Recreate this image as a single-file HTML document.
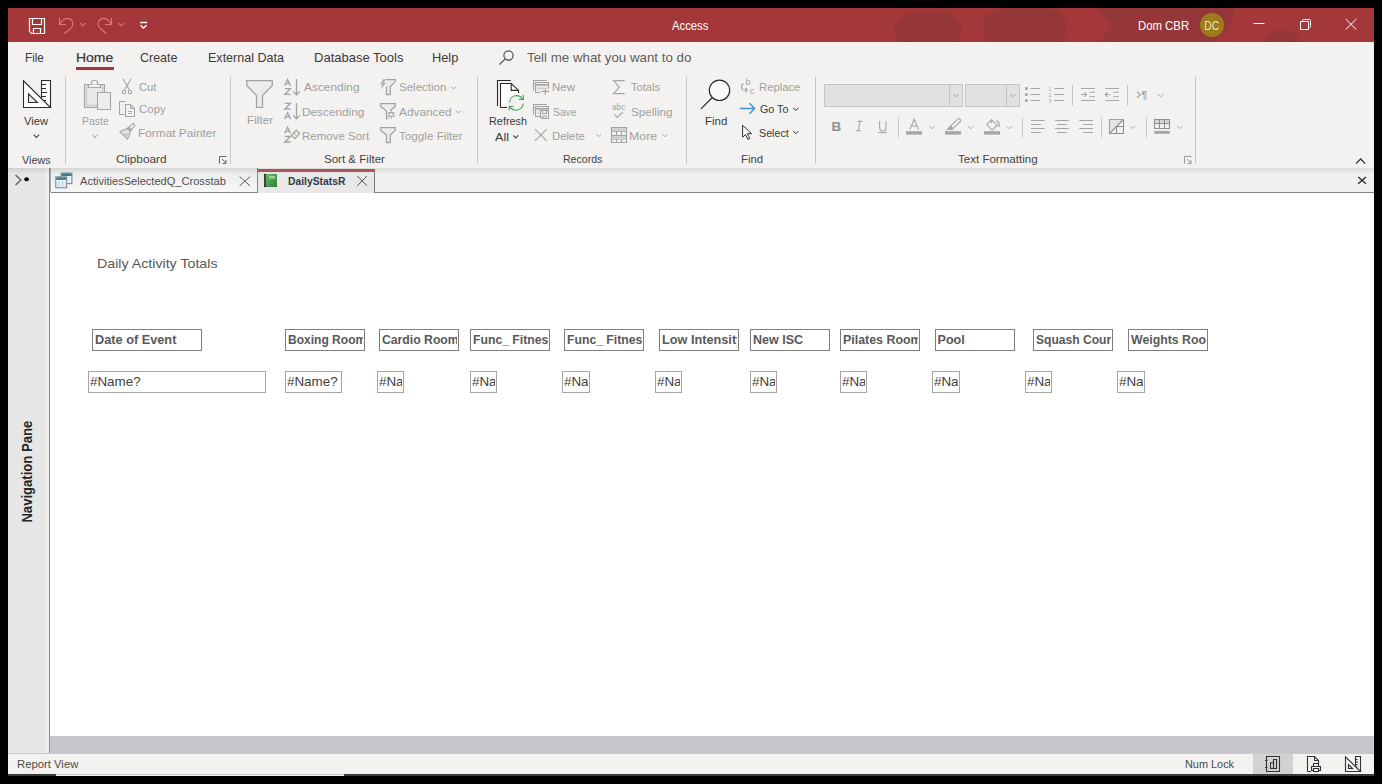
<!DOCTYPE html>
<html><head><meta charset="utf-8"><title>Access</title>
<style>
*{margin:0;padding:0;box-sizing:border-box}
html,body{width:1382px;height:784px;overflow:hidden;background:#000;font-family:"Liberation Sans",sans-serif}
.a{position:absolute}
.tx{position:absolute;white-space:pre;transform-origin:0 0;font-family:"Liberation Sans",sans-serif}
svg{position:absolute;overflow:visible}
.sep{position:absolute;width:1px;background:#c8c6c4}
.lbl{position:absolute;border:1px solid #7f7f7f;overflow:hidden;background:#fff}
.fld{position:absolute;border:1px solid #a6a6a6;overflow:hidden;background:#fff}
.lbl span,.fld span{position:absolute;white-space:pre;transform-origin:0 0;font-family:"Liberation Sans",sans-serif}
.lbl span{font-weight:bold;color:#595959}
.fld span{color:#404040}
</style></head><body>
<!-- window -->
<div class="a" style="left:8px;top:8px;width:1366px;height:766px;background:#f3f2f1"></div>
<!-- title bar -->
<div class="a" style="left:8px;top:8px;width:1366px;height:34px;background:#a4373a"></div>
<!-- ribbon bottom shadow -->
<div class="a" style="left:8px;top:168px;width:1366px;height:1px;background:#e1dfdd"></div>
<!-- tab strip -->
<div class="a" style="left:8px;top:168px;width:1366px;height:24px;background:#f0f0f0"></div>
<!-- nav pane -->
<div class="a" style="left:8px;top:168px;width:41px;height:586px;background:#e6e6e6"></div>
<div class="a" style="left:45px;top:168px;width:4px;height:586px;background:#efefef"></div>
<div class="a" style="left:49px;top:168px;width:1px;height:586px;background:#8a8a8a"></div>
<div class="a" style="left:50px;top:168px;width:1px;height:24px;background:#a8a8a8"></div>
<!-- report area -->
<div class="a" style="left:50px;top:193px;width:1324px;height:543px;background:#ffffff"></div>
<!-- h scroll -->
<div class="a" style="left:50px;top:736px;width:1324px;height:17px;background:#c6c7ca"></div>
<!-- status bar -->
<div class="a" style="left:8px;top:753px;width:1366px;height:1px;background:#c9c9c9"></div>
<div class="a" style="left:8px;top:754px;width:1366px;height:20px;background:#f3f2f1"></div>
<div class="a" style="left:8px;top:774px;width:1366px;height:2px;background:#3a3a3a"></div>
<div class="a" style="left:56px;top:774px;width:288px;height:1px;background:#c4c4c4"></div><div class="a" style="left:56px;top:775px;width:288px;height:1px;background:#f4f4f4"></div>
<div class="a" style="left:1253px;top:754px;width:40px;height:20px;background:#d2d2d2"></div>
<!-- tab 1 -->
<div class="a" style="left:51px;top:168px;width:207px;height:25px;background:linear-gradient(#eaeaea,#f7f7f7);border-right:1px solid #858585;border-bottom:1px solid #858585"></div>
<!-- tab 2 -->
<div class="a" style="left:258px;top:169px;width:117px;height:24px;background:#e8e8e8;border-right:1px solid #7a7a7a"></div>
<div class="a" style="left:258px;top:169px;width:117px;height:3px;background:#b55a5d"></div>
<div class="a" style="left:375px;top:192px;width:999px;height:1px;background:#858585"></div>
<div class="a" style="left:8px;top:168px;width:1366px;height:6px;background:linear-gradient(rgba(0,0,0,0.09),rgba(0,0,0,0))"></div>
<!-- separators -->
<div class="sep" style="left:65px;top:77px;height:87px"></div>
<div class="sep" style="left:230px;top:77px;height:87px"></div>
<div class="sep" style="left:477px;top:77px;height:87px"></div>
<div class="sep" style="left:686px;top:77px;height:87px"></div>
<div class="sep" style="left:815px;top:77px;height:87px"></div>
<div class="sep" style="left:1195px;top:77px;height:87px"></div>
<!-- Home underline -->
<div class="a" style="left:76px;top:67px;width:38px;height:3px;background:#a4373a"></div>
<!-- DC avatar -->
<div class="a" style="left:1200px;top:13px;width:24px;height:24px;border-radius:50%;background:#a27a1e"></div>
<svg width="1382" height="784" viewBox="0 0 1382 784" style="left:0;top:0" fill="none">
<!-- ===== title bar pattern ===== -->
<defs><clipPath id="tb"><rect x="8" y="8" width="1366" height="34"/></clipPath></defs>
<g fill="#933739" opacity="0.85" clip-path="url(#tb)">
 <rect x="894" y="11" width="68" height="40" rx="26"/>
 <rect x="983" y="8" width="84" height="40" rx="22"/>
 <path d="M1096 8H1235C1232 20 1226 34 1216 42H1098L1112 26Z"/>
 <ellipse cx="1282" cy="40" rx="18" ry="10"/>
</g>
<!-- ===== title bar ===== -->
<g stroke="#fff" stroke-width="1.2">
 <path d="M29.5 18.5H44.5V33.5H31.5L29.5 31.5Z"/>
 <path d="M32.5 18.5V24.5H41.5V18.5"/>
 <path d="M33.5 33.5V28.5H40.5V33.5"/>
</g>
<g stroke="#e07676" stroke-width="1.1">
 <path d="M59.5 18V24.5H66"/>
 <path d="M59.8 24.2C62 19.5 66 17.8 69 18.6C72.5 19.6 73.8 23.5 72.3 26.5C70.5 29.5 67 31 64.5 33.8"/>
 <path d="M80.2 23.2L82.8 25.8L85.4 23.2"/>
 <path d="M111.5 18V24.5H105"/>
 <path d="M111.2 24.2C109 19.5 105 17.8 102 18.6C98.5 19.6 97.2 23.5 98.7 26.5C100.5 29.5 104 31 106.5 33.8"/>
 <path d="M118.4 23.2L121.2 25.8L124 23.2"/>
</g>
<g stroke="#fff" stroke-width="1.4">
 <path d="M140 22.5H147"/>
 <path d="M140.5 25.2L143.5 28L146.5 25.2"/>
</g>
<g stroke="#fff" stroke-width="1">
 <path d="M1253.5 23.5H1264.5"/>
 <path d="M1300.5 21.5H1308.5V29.5H1300.5Z"/>
 <path d="M1302.5 21.5V20.5C1302.5 19.8 1303 19.5 1303.5 19.5H1309C1310 19.5 1310.5 20 1310.5 21V26.5C1310.5 27 1310.2 27.5 1309.5 27.5H1308.5"/>
 <path d="M1345.7 19L1356.3 29.6M1356.3 19L1345.7 29.6"/>
</g>
<circle cx="1212" cy="25" r="12" fill="#9d7a1c"/>
<text x="1204.3" y="29.8" font-family="Liberation Sans" font-size="12" fill="#f4e7b8" textLength="14.8" lengthAdjust="spacingAndGlyphs">DC</text>
<!-- search -->
<g stroke="#444" stroke-width="1.1">
 <circle cx="508.5" cy="55.5" r="4.6"/>
 <path d="M505.2 58.8L499.3 64.7"/>
</g>
<!-- ===== Views ===== -->
<g stroke="#2b2b2b" stroke-width="1.1">
 <path d="M41.5 80.5H50.5V107.5H41.5Z" fill="#fff"/>
 <path d="M41.5 84.5H46M41.5 88.5H46M41.5 92.5H47M41.5 96.5H46M41.5 100.5H46"/>
 <path d="M23.5 80.8V107.5H50.5Z" fill="#fff"/>
 <path d="M28.5 93.8V102.5H37.5Z" fill="#f0f0f0"/>
 <path d="M33.6 134.6L36.4 137.4L39.2 134.6" stroke="#444"/>
</g>
<!-- ===== Clipboard ===== -->
<g stroke="#a6a6a6" stroke-width="1.1">
 <path d="M84.5 84.5H104.5V107.5H84.5Z" fill="#e9e9e9"/>
 <path d="M86.3 86.3H102.7V105.7H86.3Z" stroke="#cdcdcd" stroke-width="1.8"/>
 <path d="M88.5 84.5H100.5V87.5H88.5Z" fill="#f3f3f3"/>
 <path d="M91.5 84.5V83C91.5 81 93 80.3 94.5 80.3C96 80.3 97.5 81 97.5 83V84.5" fill="#f3f3f3"/>
 <path d="M97.5 92.5H110.5V109.5H97.5Z" fill="#ededed"/>
 <path d="M92.2 134.8L94.8 137.4L97.4 134.8" stroke="#b0b0b0"/>
 <!-- cut -->
 <path d="M123 78.8L129.6 90.2M131 78.8L124.4 90.2"/>
 <circle cx="124" cy="92" r="1.7"/>
 <circle cx="130" cy="92" r="1.7"/>
 <!-- copy -->
 <path d="M125.5 101.5H119.5V114.5H124.5"/>
 <path d="M125.5 104.5H130.5L134.5 108.5V116.5H125.5Z" fill="#f3f3f3"/>
 <path d="M130.5 104.5V108.5H134.5"/>
 <path d="M128 111.5H132M128 113.5H132"/>
 <!-- painter -->
 <path d="M131 129.6L134.3 126.3C134.9 125.7 134.9 124.8 134.3 124.2C133.7 123.6 132.8 123.6 132.2 124.2L128.9 127.5Z" fill="#f3f3f3"/>
 <path d="M128.4 127.2L131.4 130.2L130.2 131.4L127.2 128.4Z" fill="#c4c4c4"/>
 <path d="M127.2 128.4C124.8 129.2 122 130.2 120 131.8L127.4 139.2C129 137.2 129.8 134.2 130.2 131.4Z" fill="#e4e4e4"/>
 <path d="M121.8 133.6C124.5 133.4 127 133.2 129.2 133.4L127.6 137.2Z" fill="#cdcdcd" stroke="none"/>
</g>
<!-- launchers -->
<g stroke="#666" stroke-width="1">
 <path d="M219.5 163.5V156.5H226.5"/>
 <path d="M222 159L226 163M226 160V163.5H222.5"/>
 <path d="M1184.5 163.5V156.5H1191.5" stroke="#999"/>
 <path d="M1187 159L1191 163M1191 160V163.5H1187.5" stroke="#999"/>
</g>
<!-- ===== Sort & Filter ===== -->
<g stroke="#a3a3a3" stroke-width="1.3">
 <path d="M246.7 80.7H272.3V85.5L262.5 95.5V107.3H256.5V95.5L246.7 85.5Z" fill="#ececec" stroke-linejoin="miter"/>
 <!-- ascending -->
 <path d="M284.6 85.8L287.6 79.6L290.6 85.8M285.6 83.7H289.6"/>
 <path d="M284.8 88.6H290.4L284.8 94.3H290.6"/>
 <path d="M296.5 79V94.8M293.3 91.4L296.5 94.8L299.8 91.4"/>
 <!-- descending -->
 <path d="M284.8 103.3H290.4L284.8 109H290.6"/>
 <path d="M284.6 119L287.6 112.8L290.6 119M285.6 116.9H289.6"/>
 <path d="M296.5 103V118.8M293.3 115.4L296.5 118.8L299.8 115.4"/>
 <!-- remove sort -->
 <path d="M284.6 133.5L287.6 127.3L290.6 133.5M285.6 131.4H289.6"/>
 <path d="M284.8 136.3H290.4L284.8 142H290.6"/>
 <path d="M291.5 135.5L296.3 130.3L299.6 133.6L294.8 138.6Z"/>
 <path d="M293.8 133.2L297 136.4" stroke-width="1"/>
 <!-- selection funnel -->
 <path d="M386 79.6H395.3V81.6L390.3 86.6V94.5H386.5V86.6" fill="#ececec"/>
 <path d="M383.2 79.6L380.6 84.4H382.9L381.2 88.6L385.6 83H383.4L385.2 79.6Z" fill="#b4b4b4" stroke="#a8a8a8" stroke-width="0.6"/>
 <!-- advanced -->
 <path d="M380.5 103.6H395.3V106.2L390.3 110.6M386.5 110.8V118.5H388.2M380.5 103.6V106.2L386.5 110.8" fill="#ececec"/>
 <circle cx="391.3" cy="114.6" r="2.2" stroke-width="1.1"/>
 <path d="M391.3 110.5V111.7M391.3 117.5V118.7M387.8 112.6L388.8 113.2M393.8 116L394.8 116.6M387.8 116.6L388.8 116M393.8 113.2L394.8 112.6" stroke-width="1.1"/>
 <!-- toggle -->
 <path d="M380.5 127.6H395.3V130.2L390.3 135V142.5H386.5V135L380.5 130.2Z" fill="#ececec"/>
 <path d="M451.2 86.6L453.6 89L456 86.6M456 110.6L458.4 113L460.8 110.6" stroke-width="1"/>
</g>
<!-- ===== Records ===== -->
<g stroke="#2b2b2b" stroke-width="1.1">
 <path d="M497.5 106V80.5H510.8"/>
 <path d="M500.5 107.5V83.5H511.2L518.5 90.4V93M507 107.5H500.5" fill="#fff"/>
 <path d="M511.2 83.6V90.4H518.6"/>
 <path d="M513.2 135.4L515.7 137.9L518.2 135.4" stroke="#444"/>
</g>
<g stroke="#45a05a" stroke-width="1.15" transform="translate(0 0.6)">
 <path d="M509.5 101.5C510 97.5 513 95 516.5 95C519.5 95 521.5 96.5 522.8 98.5"/>
 <path d="M523.3 94.5V98.8H519"/>
 <path d="M523.2 103C522.6 107 519.6 109.6 516.2 109.6C513.2 109.6 511.2 108 509.8 106"/>
 <path d="M509.3 110V105.7H513.6"/>
</g>
<g stroke="#a3a3a3" stroke-width="1.1">
 <!-- new -->
 <path d="M533.5 90.5V80.5H546.8"/>
 <path d="M540.5 92.5H535.5V82.5H548.5V89" fill="#ececec"/>
 <path d="M535.5 84.8H548.5" stroke-width="1.6"/>
 <path d="M538.2 88.3H540.2M541.5 88.3H543.5"/>
 <path d="M541.6 91.4H549M545.3 87.7V95"/>
 <!-- save -->
 <path d="M533.5 114.5V104.5H546.8"/>
 <path d="M540 116.5H535.5V106.5H548.5V109.5" fill="#ececec"/>
 <path d="M535.5 108.8H548.5" stroke-width="1.6"/>
 <circle cx="538.5" cy="113" r="0.6" fill="#a3a3a3" stroke="none"/>
 <path d="M540.5 110.5H548.5V118.5H541.8L540.5 117.2Z" fill="#f3f3f3"/>
 <path d="M542.5 110.5V113.5H546.5V110.5M543 118.5V116H546V118.5"/>
 <!-- delete -->
 <path d="M535 129.2L546.8 140.8M546.8 129.2L535 140.8"/>
 <path d="M596.2 134.3L598.6 136.7L601 134.3" stroke-width="1"/>
 <!-- totals -->
 <path d="M624.7 80.6H613.6L619.3 87.2L613.6 93.6H624.7"/>
 <!-- spelling check -->
 <path d="M614.3 114.4L617.2 117.4L622.8 112.2"/>
 <!-- more -->
 <path d="M611.5 127.5H626.5V142.5H611.5Z"/>
 <path d="M611.5 131.3H626.5M611.5 135.6H626.5M611.5 139H626.5M616.5 131.3V135.6M621.5 131.3V135.6M616.5 139V142.5M621.5 139V142.5"/>
 <rect x="612" y="128" width="14" height="3" fill="#d0d0d0" stroke="none"/>
 <rect x="612" y="136" width="14" height="3" fill="#d0d0d0" stroke="none"/>
 <path d="M662.6 134.3L665 136.7L667.4 134.3" stroke-width="1"/>
</g>
<text x="612" y="109.6" font-family="Liberation Sans" font-size="9.6" fill="#a3a3a3" textLength="13.4" lengthAdjust="spacingAndGlyphs">abc</text>
<!-- ===== Find ===== -->
<g stroke="#2b2b2b" stroke-width="1.2">
 <circle cx="719.5" cy="90.3" r="10.2" fill="#fafafa"/>
 <path d="M711.8 98L701 108.8"/>
 <path d="M742.6 125.3V137.2L745.4 134.6L747.9 139.4L749.8 138.5L747.4 133.7H751.6Z" fill="#fff" stroke-width="1"/>
 <path d="M793.2 107.9L795.8 110.5L798.4 107.9M793.2 131.1L795.8 133.7L798.4 131.1" stroke-width="1"/>
</g>
<g stroke="#3c8fd0" stroke-width="1.3">
 <path d="M740 108.5H755M749.4 103.2L754.7 108.5L749.4 113.8"/>
</g>
<g stroke="#a3a3a3" stroke-width="1.1">
 <path d="M743.5 83.5C741 85 740.8 88.5 743 89.8L747 90"/>
 <path d="M745.3 87.8L747.4 90L745.3 92"/>
</g>
<text x="745.6" y="85.4" font-family="Liberation Sans" font-size="9.2" fill="#a3a3a3">b</text>
<text x="749.8" y="93.9" font-family="Liberation Sans" font-size="9.2" fill="#a3a3a3">c</text>
<!-- ===== Text Formatting ===== -->
<g stroke="#c4c4c4" stroke-width="1">
 <path d="M824.5 84.5H962.5V106.5H824.5Z" fill="#e1e1e1"/>
 <path d="M949.5 85V106"/>
 <path d="M965.5 84.5H1019.5V106.5H965.5Z" fill="#e1e1e1"/>
 <path d="M1006.5 85V106"/>
</g>
<g stroke="#a6a6a6" stroke-width="1">
 <path d="M953.2 94.2L955.8 96.8L958.4 94.2M1010.2 94.2L1012.8 96.8L1015.4 94.2"/>
</g>
<g stroke="#a6a6a6" stroke-width="1.1">
 <!-- U -->
 <path d="M879.6 121.2V127.5C879.6 129.8 881 131 882.8 131C884.6 131 886 129.8 886 127.5V121.2"/>
 <path d="M878.2 132.6H887"/>
 <!-- I italic -->
 <path d="M857.5 121.4H862.5M855.8 130.8H860.8M860 121.4L858.3 130.8"/>
 <!-- A -->
 <path d="M909.8 129.6L914.2 119.2L918.6 129.6M911.3 126H917.1"/>
 <path d="M929.2 126.2L931.8 128.8L934.4 126.2M968 126.2L970.6 128.8L973.2 126.2M1006.8 126.2L1009.4 128.8L1012 126.2M1130.2 126.2L1132.6 128.6L1135 126.2M1177.2 126.2L1179.6 128.6L1182 126.2M1157.8 94.2L1160.6 96.8L1163.4 94.2" stroke-width="1"/>
 <!-- highlighter -->
 <path d="M950.5 126.2L957.8 119.1C958.6 118.4 959.6 118.4 960.2 119.1C960.9 119.8 960.9 120.8 960.2 121.5L953 128.6Z"/>
 <path d="M950.5 126.2L947.5 129.5H952L953 128.6Z" fill="#a6a6a6"/>
 <!-- fill bucket -->
 <path d="M986.8 124.8L991.5 119.5L997.2 125.2L992.2 130.2Z"/>
 <path d="M991.5 119.5V123" />
 <path d="M996 121.5C997.5 120.5 999 121.5 999 124V127" stroke-width="1.3"/>
 <!-- bullets -->
 <path d="M1030.3 88.5H1040.1M1030.3 94.5H1040.1M1030.3 100.5H1040.1"/>
 <path d="M1054.2 88.5H1064M1054.2 94.5H1064M1054.2 100.5H1064"/>
 <!-- indent -->
 <path d="M1081 88.5H1095M1089.5 92.3H1095M1089.5 96.7H1095M1081 100.5H1095M1081 94.5H1086.4M1084.2 92.2L1086.5 94.5L1084.2 96.8"/>
 <path d="M1105.2 88.5H1119M1113.1 92.3H1119M1113.1 96.7H1119M1105.2 100.5H1119M1105.2 94.5H1110.6M1107.5 92.2L1105.2 94.5L1107.5 96.8"/>
 <path d="M1137 91.8L1140.4 94.8L1137 97.7" stroke-width="1.2"/>
 <!-- align -->
 <path d="M1031 120.5H1044.7M1031 124.5H1040.8M1031 128.5H1044.7M1031 132.5H1040.8"/>
 <path d="M1055.2 120.5H1068.8M1057.1 124.5H1066.9M1055.2 128.5H1068.8M1057.1 132.5H1066.9"/>
 <path d="M1079.3 120.5H1092.9M1083.2 124.5H1092.9M1079.3 128.5H1092.9M1083.2 132.5H1092.9"/>
</g>
<g fill="#a6a6a6">
 <rect x="1025" y="87.2" width="2.7" height="2.7"/>
 <rect x="1025" y="93.2" width="2.7" height="2.7"/>
 <rect x="1025" y="99.2" width="2.7" height="2.7"/>
 <rect x="906" y="131.2" width="16" height="3.4"/>
 <rect x="945" y="131.2" width="16" height="3.4"/>
 <rect x="984" y="131.2" width="16" height="3.4"/>
 <rect x="1154.2" y="130.9" width="15.6" height="2.9"/>
</g>
<text x="1048.6" y="91" font-family="Liberation Sans" font-size="5" fill="#a6a6a6">1</text>
<text x="1048.6" y="97" font-family="Liberation Sans" font-size="5" fill="#a6a6a6">2</text>
<text x="1048.6" y="103" font-family="Liberation Sans" font-size="5" fill="#a6a6a6">3</text>
<text x="831.5" y="131" font-family="Liberation Sans" font-size="13.4" font-weight="bold" fill="#8f8f8f">B</text>
<text x="1141.4" y="98.9" font-family="Liberation Sans" font-size="10.4" font-weight="bold" fill="#a6a6a6">¶</text>
<g stroke="#8f8f8f" stroke-width="1.1">
 <path d="M1109.5 119.5H1123.5V133.5H1109.5Z"/>
 <path d="M1109.8 119.8V133.2L1123.2 119.8Z" fill="#e4e4e4" stroke="none"/>
 <path d="M1109.5 133.5L1123.5 119.5M1116.5 126.5H1123.5M1116.5 126.5V133.5"/>
 <path d="M1154.5 119.5H1169.5V128.5H1154.5Z"/>
 <rect x="1155" y="120" width="14" height="2.8" fill="#d4d4d4" stroke="none"/>
 <path d="M1154.5 123.5H1169.5M1159.5 119.5V128.5M1164.5 119.5V128.5"/>
</g>
<g stroke="#c8c8c8" stroke-width="1">
 <path d="M898.5 117.5V137.5M1022.5 117.5V137.5M1101.5 117.5V137.5M1146.5 117.5V137.5M1072.5 85V105.5M1127.5 85V105.5"/>
</g>
<!-- ribbon collapse -->
<path d="M1356 163.6L1360.6 159L1365.2 163.6" stroke="#333" stroke-width="1.3"/>
<!-- ===== doc tabs ===== -->
<path d="M15.6 175L21 180L15.6 185" stroke="#555" stroke-width="1.2"/>
<ellipse cx="26.6" cy="179.3" rx="2.4" ry="2" fill="#000"/>
<g>
 <rect x="61.2" y="173" width="10.7" height="10.7" fill="#e8f2f6" stroke="#61738e" stroke-width="0.9"/>
 <rect x="61.6" y="173.4" width="10" height="2.6" fill="#3a8080"/>
 <rect x="55.8" y="176.9" width="10.9" height="10.9" fill="#f0f6fa" stroke="#61738e" stroke-width="0.9"/>
 <rect x="56.2" y="177.3" width="10.1" height="2.6" fill="#3a8080"/>
 <path d="M59 180V187.5M62.5 180V187.5M56 182.8H66.5M56 185.2H66.5" stroke="#b8c8d8" stroke-width="0.6"/>
</g>
<g stroke="#555" stroke-width="1.1">
 <path d="M239.6 176.5L250.2 186M250.2 176.5L239.6 186" stroke="#606060" stroke-width="1"/>
 <path d="M357.3 176L367 185.8M367 176L357.3 185.8" stroke="#505050" stroke-width="1"/>
</g>
<path d="M1358.2 177L1366 183.8M1366 177L1358.2 183.8" stroke="#333" stroke-width="1.5"/>
<g>
 <defs><linearGradient id="gr" x1="0" y1="0" x2="1" y2="1"><stop offset="0" stop-color="#72c072"/><stop offset="1" stop-color="#2f7d35"/></linearGradient></defs>
 <rect x="264" y="174" width="13" height="13" fill="url(#gr)"/>
 <rect x="264" y="174" width="2" height="13" fill="#1c1c1c"/>
 <path d="M265 175.5V186" stroke="#fff" stroke-width="0.8" stroke-dasharray="0.8 1.2"/>
 <rect x="269" y="176" width="6" height="2.5" fill="#9ad69a"/>
</g>
<!-- ===== status bar view icons ===== -->
<g stroke="#333" stroke-width="1.1">
 <path d="M1266.5 756.5H1279.5V771.5H1266.5Z"/>
 <path d="M1265 760.5H1267.5M1265 767.5H1267.5"/>
 <path d="M1270.5 762.8H1273.5V768.5H1270.5ZM1273.5 759.5H1276.5V768.5H1273.5Z"/>
 <path d="M1307.5 771.5V756.5H1314.5L1318.5 760.5V763M1314.5 756.5V760.5H1318.5M1307.5 771.5H1311"/>
 <path d="M1313.5 766.5V763.5H1318.5V766.5M1311.5 766.5H1320.5V770.5H1311.5Z"/>
 <path d="M1313.5 768.5H1318.5V771.5H1313.5Z" fill="#f3f2f1"/>
 <path d="M1355.5 756.5H1360.5V771.5H1355.5Z"/>
 <path d="M1355.5 759.5H1357.5M1355.5 762H1358M1355.5 764.5H1357.5M1355.5 767H1357.5"/>
 <path d="M1345.5 756.8V771.5H1360.5Z" fill="#f3f2f1"/>
 <path d="M1348.5 764.5V768.5H1352.5Z"/>
</g>
<!-- Navigation pane text -->
<text x="0" y="0" transform="translate(31.7 522.6) rotate(-90)" font-family="Liberation Sans" font-size="14.4" font-weight="bold" fill="#262626" textLength="101.9" lengthAdjust="spacingAndGlyphs">Navigation Pane</text>
</svg>
<div class="tx" style="left:672.00px;top:20.23px;font-size:12.6px;line-height:12.6px;color:#ffffff;font-weight:normal;transform:scaleX(0.8934);">Access</div>
<div class="tx" style="left:1137.60px;top:20.23px;font-size:12.6px;line-height:12.6px;color:#ffffff;font-weight:normal;transform:scaleX(0.9014);">Dom CBR</div>
<div class="tx" style="left:25.12px;top:50.74px;font-size:13.3px;line-height:13.3px;color:#3b3a39;font-weight:normal;transform:scaleX(0.8787);">File</div>
<div class="tx" style="left:75.55px;top:50.74px;font-size:13.3px;line-height:13.3px;color:#333333;font-weight:normal;transform:scaleX(1.0477);-webkit-text-stroke:0.2px #333333;">Home</div>
<div class="tx" style="left:140.30px;top:50.74px;font-size:13.3px;line-height:13.3px;color:#3b3a39;font-weight:normal;transform:scaleX(0.9364);">Create</div>
<div class="tx" style="left:208.16px;top:50.74px;font-size:13.3px;line-height:13.3px;color:#3b3a39;font-weight:normal;transform:scaleX(0.9431);">External Data</div>
<div class="tx" style="left:313.52px;top:50.74px;font-size:13.3px;line-height:13.3px;color:#3b3a39;font-weight:normal;transform:scaleX(0.9790);">Database Tools</div>
<div class="tx" style="left:432.04px;top:50.74px;font-size:13.3px;line-height:13.3px;color:#3b3a39;font-weight:normal;transform:scaleX(0.9633);">Help</div>
<div class="tx" style="left:527.40px;top:51.14px;font-size:13.3px;line-height:13.3px;color:#605e5c;font-weight:normal;transform:scaleX(1.0019);">Tell me what you want to do</div>
<div class="tx" style="left:24.00px;top:115.51px;font-size:11.8px;line-height:11.8px;color:#3b3a39;font-weight:normal;transform:scaleX(0.9521);">View</div>
<div class="tx" style="left:22.40px;top:154.66px;font-size:11.8px;line-height:11.8px;color:#444444;font-weight:normal;transform:scaleX(0.9153);">Views</div>
<div class="tx" style="left:81.75px;top:115.51px;font-size:11.8px;line-height:11.8px;color:#a19f9d;font-weight:normal;transform:scaleX(0.8904);">Paste</div>
<div class="tx" style="left:138.75px;top:81.76px;font-size:11.8px;line-height:11.8px;color:#a19f9d;font-weight:normal;transform:scaleX(0.9512);">Cut</div>
<div class="tx" style="left:138.75px;top:104.01px;font-size:11.8px;line-height:11.8px;color:#a19f9d;font-weight:normal;transform:scaleX(0.9714);">Copy</div>
<div class="tx" style="left:137.60px;top:127.51px;font-size:11.8px;line-height:11.8px;color:#a19f9d;font-weight:normal;transform:scaleX(1.0040);">Format Painter</div>
<div class="tx" style="left:115.60px;top:154.36px;font-size:11.8px;line-height:11.8px;color:#444444;font-weight:normal;transform:scaleX(1.0013);">Clipboard</div>
<div class="tx" style="left:246.60px;top:115.26px;font-size:11.8px;line-height:11.8px;color:#a19f9d;font-weight:normal;transform:scaleX(0.9948);">Filter</div>
<div class="tx" style="left:303.50px;top:82.36px;font-size:11.8px;line-height:11.8px;color:#a19f9d;font-weight:normal;transform:scaleX(1.0086);">Ascending</div>
<div class="tx" style="left:302.20px;top:106.51px;font-size:11.8px;line-height:11.8px;color:#a19f9d;font-weight:normal;transform:scaleX(1.0009);">Descending</div>
<div class="tx" style="left:302.20px;top:130.86px;font-size:11.8px;line-height:11.8px;color:#a19f9d;font-weight:normal;transform:scaleX(0.9747);">Remove Sort</div>
<div class="tx" style="left:323.75px;top:154.36px;font-size:11.8px;line-height:11.8px;color:#444444;font-weight:normal;transform:scaleX(0.9784);">Sort &amp; Filter</div>
<div class="tx" style="left:399.40px;top:82.36px;font-size:11.8px;line-height:11.8px;color:#a19f9d;font-weight:normal;transform:scaleX(0.9767);">Selection</div>
<div class="tx" style="left:399.40px;top:106.51px;font-size:11.8px;line-height:11.8px;color:#a19f9d;font-weight:normal;transform:scaleX(1.0037);">Advanced</div>
<div class="tx" style="left:399.40px;top:130.86px;font-size:11.8px;line-height:11.8px;color:#a19f9d;font-weight:normal;transform:scaleX(0.9903);">Toggle Filter</div>
<div class="tx" style="left:488.60px;top:115.51px;font-size:11.8px;line-height:11.8px;color:#3b3a39;font-weight:normal;transform:scaleX(0.9203);">Refresh</div>
<div class="tx" style="left:495.25px;top:131.51px;font-size:11.8px;line-height:11.8px;color:#3b3a39;font-weight:normal;transform:scaleX(1.0689);">All</div>
<div class="tx" style="left:551.60px;top:82.36px;font-size:11.8px;line-height:11.8px;color:#a19f9d;font-weight:normal;transform:scaleX(0.9801);">New</div>
<div class="tx" style="left:552.60px;top:106.51px;font-size:11.8px;line-height:11.8px;color:#a19f9d;font-weight:normal;transform:scaleX(0.8746);">Save</div>
<div class="tx" style="left:551.60px;top:130.86px;font-size:11.8px;line-height:11.8px;color:#a19f9d;font-weight:normal;transform:scaleX(0.9641);">Delete</div>
<div class="tx" style="left:563.00px;top:154.36px;font-size:11.8px;line-height:11.8px;color:#444444;font-weight:normal;transform:scaleX(0.8949);">Records</div>
<div class="tx" style="left:630.60px;top:82.36px;font-size:11.8px;line-height:11.8px;color:#a19f9d;font-weight:normal;transform:scaleX(0.9428);">Totals</div>
<div class="tx" style="left:630.60px;top:106.51px;font-size:11.8px;line-height:11.8px;color:#a19f9d;font-weight:normal;transform:scaleX(0.9876);">Spelling</div>
<div class="tx" style="left:629.30px;top:130.86px;font-size:11.8px;line-height:11.8px;color:#a19f9d;font-weight:normal;transform:scaleX(1.0507);">More</div>
<div class="tx" style="left:704.75px;top:115.51px;font-size:11.8px;line-height:11.8px;color:#3b3a39;font-weight:normal;transform:scaleX(0.9715);">Find</div>
<div class="tx" style="left:759.00px;top:81.76px;font-size:11.8px;line-height:11.8px;color:#a19f9d;font-weight:normal;transform:scaleX(0.9561);">Replace</div>
<div class="tx" style="left:759.75px;top:104.01px;font-size:11.8px;line-height:11.8px;color:#3b3a39;font-weight:normal;transform:scaleX(0.9087);">Go To</div>
<div class="tx" style="left:759.40px;top:127.76px;font-size:11.8px;line-height:11.8px;color:#3b3a39;font-weight:normal;transform:scaleX(0.9057);">Select</div>
<div class="tx" style="left:740.60px;top:154.36px;font-size:11.8px;line-height:11.8px;color:#444444;font-weight:normal;transform:scaleX(0.9670);">Find</div>
<div class="tx" style="left:958.30px;top:154.36px;font-size:11.8px;line-height:11.8px;color:#444444;font-weight:normal;transform:scaleX(0.9785);">Text Formatting</div>
<div class="tx" style="left:80.30px;top:175.38px;font-size:11.6px;line-height:11.6px;color:#505050;font-weight:normal;transform:scaleX(0.9549);">ActivitiesSelectedQ_Crosstab</div>
<div class="tx" style="left:287.50px;top:175.69px;font-size:11px;line-height:11px;color:#323a45;font-weight:bold;transform:scaleX(0.9397);">DailyStatsR</div>
<div class="tx" style="left:96.71px;top:256.79px;font-size:13px;line-height:13px;color:#595959;font-weight:normal;transform:scaleX(1.0926);">Daily Activity Totals</div>
<div class="tx" style="left:16.50px;top:758.66px;font-size:11.5px;line-height:11.5px;color:#4a4a4a;font-weight:normal;transform:scaleX(0.9822);">Report View</div>
<div class="tx" style="left:1184.50px;top:758.66px;font-size:11.5px;line-height:11.5px;color:#4a4a4a;font-weight:normal;transform:scaleX(0.9478);">Num Lock</div>
<div class="lbl" style="left:92px;top:329px;width:110px;height:22px"><div style="position:absolute;left:0;top:0;width:107px;height:20px;overflow:hidden"><span style="left:1.50px;top:4.13px;font-size:12.6px;line-height:12.6px;transform:scaleX(1.0113)">Date of Event</span></div></div>
<div class="lbl" style="left:285px;top:329px;width:80px;height:22px"><div style="position:absolute;left:0;top:0;width:77px;height:20px;overflow:hidden"><span style="left:1.50px;top:4.13px;font-size:12.6px;line-height:12.6px;transform:scaleX(0.9550)">Boxing Room</span></div></div>
<div class="lbl" style="left:379px;top:329px;width:80px;height:22px"><div style="position:absolute;left:0;top:0;width:77px;height:20px;overflow:hidden"><span style="left:1.50px;top:4.13px;font-size:12.6px;line-height:12.6px;transform:scaleX(0.9700)">Cardio Room</span></div></div>
<div class="lbl" style="left:470px;top:329px;width:80px;height:22px"><div style="position:absolute;left:0;top:0;width:77px;height:20px;overflow:hidden"><span style="left:1.50px;top:4.13px;font-size:12.6px;line-height:12.6px;transform:scaleX(0.9700)">Func_ Fitness</span></div></div>
<div class="lbl" style="left:564px;top:329px;width:80px;height:22px"><div style="position:absolute;left:0;top:0;width:77px;height:20px;overflow:hidden"><span style="left:1.50px;top:4.13px;font-size:12.6px;line-height:12.6px;transform:scaleX(0.9700)">Func_ Fitness</span></div></div>
<div class="lbl" style="left:659px;top:329px;width:80px;height:22px"><div style="position:absolute;left:0;top:0;width:77px;height:20px;overflow:hidden"><span style="left:1.50px;top:4.13px;font-size:12.6px;line-height:12.6px;transform:scaleX(1.0090)">Low Intensity</span></div></div>
<div class="lbl" style="left:750px;top:329px;width:80px;height:22px"><div style="position:absolute;left:0;top:0;width:77px;height:20px;overflow:hidden"><span style="left:1.50px;top:4.13px;font-size:12.6px;line-height:12.6px;transform:scaleX(0.9940)">New ISC</span></div></div>
<div class="lbl" style="left:840px;top:329px;width:80px;height:22px"><div style="position:absolute;left:0;top:0;width:77px;height:20px;overflow:hidden"><span style="left:1.50px;top:4.13px;font-size:12.6px;line-height:12.6px;transform:scaleX(0.9850)">Pilates Room</span></div></div>
<div class="lbl" style="left:935px;top:329px;width:80px;height:22px"><div style="position:absolute;left:0;top:0;width:77px;height:20px;overflow:hidden"><span style="left:1.50px;top:4.13px;font-size:12.6px;line-height:12.6px;transform:scaleX(1.0000)">Pool</span></div></div>
<div class="lbl" style="left:1033px;top:329px;width:80px;height:22px"><div style="position:absolute;left:0;top:0;width:77px;height:20px;overflow:hidden"><span style="left:1.50px;top:4.13px;font-size:12.6px;line-height:12.6px;transform:scaleX(0.9580)">Squash Court</span></div></div>
<div class="lbl" style="left:1128px;top:329px;width:80px;height:22px"><div style="position:absolute;left:0;top:0;width:77px;height:20px;overflow:hidden"><span style="left:1.50px;top:4.13px;font-size:12.6px;line-height:12.6px;transform:scaleX(0.9770)">Weights Room</span></div></div>
<div class="fld" style="left:88px;top:371px;width:178px;height:22px"><div style="position:absolute;left:0;top:0;width:175px;height:20px;overflow:hidden"><span style="left:1.20px;top:4.06px;font-size:12.8px;line-height:12.8px;transform:scaleX(1.0466)">#Name?</span></div></div>
<div class="fld" style="left:285px;top:371px;width:57px;height:22px"><div style="position:absolute;left:0;top:0;width:54px;height:20px;overflow:hidden"><span style="left:1.20px;top:4.06px;font-size:12.8px;line-height:12.8px;transform:scaleX(1.0466)">#Name?</span></div></div>
<div class="fld" style="left:377px;top:371px;width:27px;height:22px"><div style="position:absolute;left:0;top:0;width:24px;height:20px;overflow:hidden"><span style="left:1.20px;top:4.06px;font-size:12.8px;line-height:12.8px;transform:scaleX(1.0466)">#Name?</span></div></div>
<div class="fld" style="left:470px;top:371px;width:27px;height:22px"><div style="position:absolute;left:0;top:0;width:24px;height:20px;overflow:hidden"><span style="left:1.20px;top:4.06px;font-size:12.8px;line-height:12.8px;transform:scaleX(1.0466)">#Name?</span></div></div>
<div class="fld" style="left:562px;top:371px;width:28px;height:22px"><div style="position:absolute;left:0;top:0;width:25px;height:20px;overflow:hidden"><span style="left:1.20px;top:4.06px;font-size:12.8px;line-height:12.8px;transform:scaleX(1.0466)">#Name?</span></div></div>
<div class="fld" style="left:655px;top:371px;width:27px;height:22px"><div style="position:absolute;left:0;top:0;width:24px;height:20px;overflow:hidden"><span style="left:1.20px;top:4.06px;font-size:12.8px;line-height:12.8px;transform:scaleX(1.0466)">#Name?</span></div></div>
<div class="fld" style="left:750px;top:371px;width:27px;height:22px"><div style="position:absolute;left:0;top:0;width:24px;height:20px;overflow:hidden"><span style="left:1.20px;top:4.06px;font-size:12.8px;line-height:12.8px;transform:scaleX(1.0466)">#Name?</span></div></div>
<div class="fld" style="left:840px;top:371px;width:27px;height:22px"><div style="position:absolute;left:0;top:0;width:24px;height:20px;overflow:hidden"><span style="left:1.20px;top:4.06px;font-size:12.8px;line-height:12.8px;transform:scaleX(1.0466)">#Name?</span></div></div>
<div class="fld" style="left:932px;top:371px;width:28px;height:22px"><div style="position:absolute;left:0;top:0;width:25px;height:20px;overflow:hidden"><span style="left:1.20px;top:4.06px;font-size:12.8px;line-height:12.8px;transform:scaleX(1.0466)">#Name?</span></div></div>
<div class="fld" style="left:1025px;top:371px;width:27px;height:22px"><div style="position:absolute;left:0;top:0;width:24px;height:20px;overflow:hidden"><span style="left:1.20px;top:4.06px;font-size:12.8px;line-height:12.8px;transform:scaleX(1.0466)">#Name?</span></div></div>
<div class="fld" style="left:1117px;top:371px;width:28px;height:22px"><div style="position:absolute;left:0;top:0;width:25px;height:20px;overflow:hidden"><span style="left:1.20px;top:4.06px;font-size:12.8px;line-height:12.8px;transform:scaleX(1.0466)">#Name?</span></div></div>
</body></html>
